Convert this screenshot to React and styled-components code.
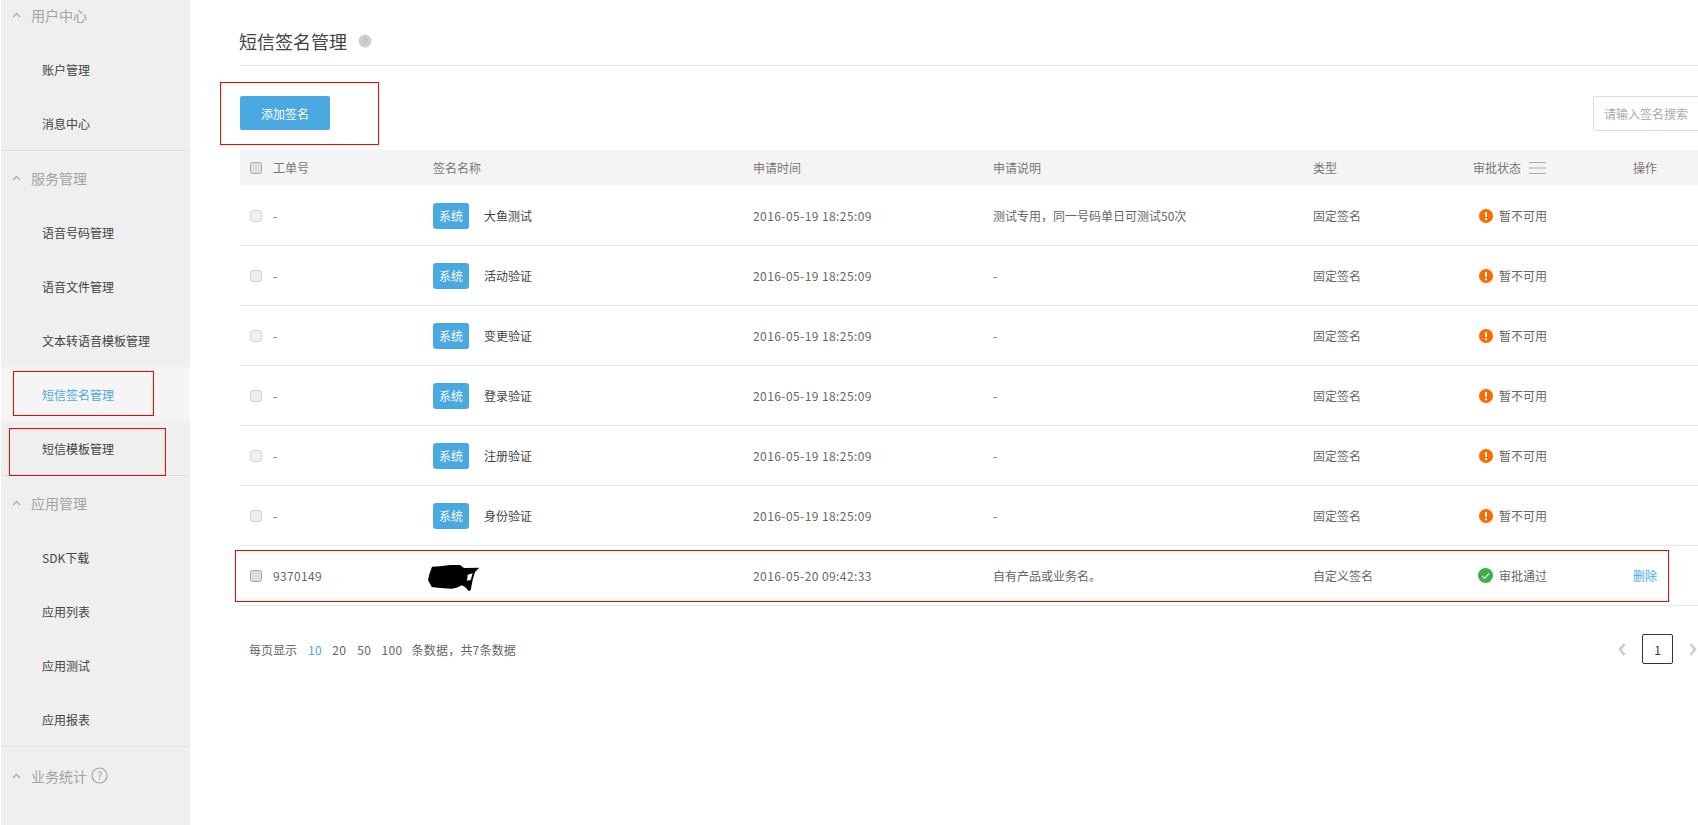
import React from "react";
import styled, { createGlobalStyle } from "styled-components";

const Global = createGlobalStyle`
  html, body { margin: 0; padding: 0; height: 100%; background: #fff; overflow: hidden; }
  body { font-family: "Noto Sans CJK SC", "Noto Sans", "Liberation Sans", sans-serif; font-size: 12px; color: #666; }
`;

const Page = styled.div`
  position: relative;
  display: flex;
  width: 1698px;
  height: 825px;
  overflow: hidden;
`;

const Sidebar = styled.nav`
  flex: 0 0 189px;
  margin-left: 1px;
  height: 825px;
  background: #efefef;
  overflow: hidden;
`;

const MenuStack = styled.div`
  margin-top: -12px;
`;

const Group = styled.section`
  border-bottom: 1px solid #e0e0e0;
  &:last-child { border-bottom: 0; padding-top: 2px; }
`;

const GroupTitle = styled.div`
  display: flex;
  align-items: center;
  height: 54px;
  padding-left: 11px;
  padding-bottom: 1px;
  box-sizing: border-box;
  font-size: 14px;
  color: #a3a3a3;
`;

const Caret = styled.svg`
  width: 9px;
  height: 6px;
  margin-right: 10px;
  fill: none;
  stroke: #aaa;
  stroke-width: 1.4;
`;

const HelpRing = styled.svg`
  width: 17px;
  height: 17px;
  margin-left: 4px;
`;

const MenuItem = styled.a`
  display: flex;
  align-items: center;
  height: 54px;
  padding-left: 41px;
  font-size: 12px;
  color: ${p => (p.$active ? "#4aa9e0" : "#444")};
  background: ${p => (p.$active ? "#f5f5f5" : "transparent")};
`;

const Main = styled.main`
  flex: 0 0 auto;
  width: 1470px;
  margin-left: 50px;
`;

const Heading = styled.header`
  display: flex;
  align-items: center;
  box-sizing: border-box;
  height: 66px;
  padding-top: 17px;
  border-bottom: 1px solid #e8e8e8;
`;

const Title = styled.h1`
  margin: 0 0 0 -1px;
  font-size: 18px;
  font-weight: 400;
  color: #444;
`;

const TitleHelp = styled.svg`
  width: 14px;
  height: 14px;
  margin-left: 11px;
`;

const Toolbar = styled.div`
  display: flex;
  justify-content: space-between;
  align-items: flex-start;
  box-sizing: border-box;
  height: 84px;
  padding-top: 30px;
`;

const PrimaryButton = styled.button`
  width: 90px;
  height: 34px;
  border: 0;
  border-radius: 2px;
  background: #4aa9e0;
  color: #fff;
  font: inherit;
  padding: 0;
`;

const SearchInput = styled.input`
  box-sizing: border-box;
  width: 117px;
  height: 35px;
  padding: 0 10px;
  border: 1px solid #ddd;
  border-radius: 2px;
  font: inherit;
  &::placeholder { color: #aaa; opacity: 1; }
`;

const columns = "193px 320px 240px 320px 160px 160px 77px";

const HeadRow = styled.div`
  display: grid;
  grid-template-columns: ${columns};
  align-items: center;
  height: 35px;
  margin-bottom: 1px;
  background: #f4f4f4;
  color: #777;
`;

const Row = styled.div`
  display: grid;
  grid-template-columns: ${columns};
  align-items: center;
  box-sizing: border-box;
  height: 60px;
  border-bottom: 1px solid #e8e8e8;
  color: #666;
`;

const IdCell = styled.div`
  display: flex;
  align-items: center;
  gap: 11px;
  padding-left: 10px;
`;

const IdText = styled.span`
  letter-spacing: 0.35px;
`;

const DateCell = styled.div`
  letter-spacing: 0.42px;
`;

const Check = styled.input.attrs({ type: "checkbox" })`
  appearance: none;
  box-sizing: border-box;
  width: 12px;
  height: 12px;
  margin: 0;
  border-radius: 3px;
  border: 1px solid ${p => (p.$strong ? "#a8a8a8" : "#d2d2d2")};
  background: ${p => (p.$strong ? "#dedede" : "#efefef")};
`;

const NameCell = styled.div`
  display: flex;
  align-items: center;
  gap: 15px;
  color: #444;
`;

const Badge = styled.span`
  display: flex;
  align-items: center;
  justify-content: center;
  width: 36px;
  height: 26px;
  border-radius: 3px;
  background: #4aa9e0;
  color: #fff;
`;

const Scribble = styled.svg`
  width: 70px;
  height: 45px;
  margin: 5px 0 0 -13px;
`;

const HeadSort = styled.div`
  display: flex;
  align-items: center;
  gap: 8px;
`;

const SortIcon = styled.svg`
  width: 17px;
  height: 14px;
`;

const StatusCell = styled.div`
  display: flex;
  align-items: center;
  gap: 6px;
  padding-left: ${p => (p.$ok ? "5px" : "6px")};
`;

const StatusIcon = styled.svg`
  width: ${p => (p.$ok ? "15px" : "14px")};
  height: ${p => (p.$ok ? "15px" : "14px")};
`;

const ActionLink = styled.a`
  color: #4aa9e0;
`;

const Footer = styled.footer`
  display: flex;
  justify-content: space-between;
  align-items: center;
  box-sizing: border-box;
  height: 86px;
  padding: 0 13px 0 9px;
`;

const PageSizes = styled.div`
  display: flex;
  align-items: center;
`;

const SizeLabel = styled.span`
  margin-right: ${p => p.$gap || 0}px;
  letter-spacing: ${p => (p.$gap ? 0 : 0.2)}px;
`;

const SizeOption = styled.a`
  margin-right: ${p => p.$gap}px;
  letter-spacing: 0.4px;
  color: ${p => (p.$active ? "#4aa9e0" : "#666")};
`;

const Pager = styled.div`
  display: flex;
  align-items: center;
  gap: 16px;
`;

const PagerArrow = styled.svg`
  width: 8px;
  height: 13px;
  fill: none;
  stroke: #ccc;
  stroke-width: 2.6;
`;

const PageBox = styled.span`
  display: flex;
  align-items: center;
  justify-content: center;
  box-sizing: border-box;
  width: 31px;
  height: 30px;
  border: 1px solid #333;
  border-radius: 2px;
  color: #333;
`;

const Annotation = styled.div`
  position: absolute;
  box-sizing: border-box;
  left: ${p => p.$x}px;
  top: ${p => p.$y}px;
  width: ${p => p.$w}px;
  height: ${p => p.$h}px;
  border: 1px solid #f00;
  pointer-events: none;
`;

const menu = [
  { title: "用户中心", items: ["账户管理", "消息中心"] },
  { title: "服务管理", items: ["语音号码管理", "语音文件管理", "文本转语音模板管理", "短信签名管理", "短信模板管理"] },
  { title: "应用管理", items: ["SDK下载", "应用列表", "应用测试", "应用报表"] },
  { title: "业务统计", help: true, items: ["语音日调用统计"] },
];

const rows = [
  ["大鱼测试", "测试专用，同一号码单日可测试50次"],
  ["活动验证", "-"],
  ["变更验证", "-"],
  ["登录验证", "-"],
  ["注册验证", "-"],
  ["身份验证", "-"],
];

const Warn = () => (
  <StatusIcon viewBox="0 0 14 14">
    <circle cx="7" cy="7" r="7" fill="#ff6a00" />
    <rect x="6" y="3" width="2" height="5" fill="#fff" />
    <rect x="6" y="9.2" width="2" height="2" fill="#fff" />
  </StatusIcon>
);

const Ok = () => (
  <StatusIcon $ok viewBox="0 0 15 15">
    <circle cx="7.5" cy="7.5" r="7.5" fill="#3fae49" />
    <path d="M4 7.8l2.6 2.6L11.2 5.4" fill="none" stroke="#dff3e0" strokeWidth="1.2" />
  </StatusIcon>
);

export default function App() {
  return (
    <Page>
      <Global />
      <Sidebar>
        <MenuStack>
          {menu.map(g => (
            <Group key={g.title}>
              <GroupTitle>
                <Caret viewBox="0 0 9 6"><path d="M1 5l3.5-3.5L8 5" /></Caret>
                {g.title}
                {g.help && (
                  <HelpRing viewBox="0 0 17 17">
                    <circle cx="8.5" cy="8.5" r="7.5" fill="none" stroke="#a3a3a3" strokeWidth="1.2" />
                    <text x="8.5" y="12.5" textAnchor="middle" fontSize="11" fill="#a3a3a3">?</text>
                  </HelpRing>
                )}
              </GroupTitle>
              {g.items.map(it => (
                <MenuItem key={it} $active={it === "短信签名管理"}>{it}</MenuItem>
              ))}
            </Group>
          ))}
        </MenuStack>
      </Sidebar>
      <Main>
        <Heading>
          <Title>短信签名管理</Title>
          <TitleHelp viewBox="0 0 14 14">
            <circle cx="7" cy="7" r="6.5" fill="#cfcfcf" />
            <text x="7" y="10.5" textAnchor="middle" fontSize="9" fill="#b5b5b5">?</text>
          </TitleHelp>
        </Heading>
        <Toolbar>
          <PrimaryButton>添加签名</PrimaryButton>
          <SearchInput placeholder="请输入签名搜索" />
        </Toolbar>
        <HeadRow>
          <IdCell><Check $strong />工单号</IdCell>
          <div>签名名称</div>
          <div>申请时间</div>
          <div>申请说明</div>
          <div>类型</div>
          <HeadSort>
            审批状态
            <SortIcon viewBox="0 0 17 14">
              <path d="M0 1.5h17M0 7h17M0 12.5h17" stroke="#aaa" strokeWidth="1" />
            </SortIcon>
          </HeadSort>
          <div>操作</div>
        </HeadRow>
        {rows.map(([name, note]) => (
          <Row key={name}>
            <IdCell><Check />-</IdCell>
            <NameCell><Badge>系统</Badge>{name}</NameCell>
            <DateCell>2016-05-19 18:25:09</DateCell>
            <div>{note}</div>
            <div>固定签名</div>
            <StatusCell><Warn />暂不可用</StatusCell>
            <div />
          </Row>
        ))}
        <Row>
          <IdCell><Check $strong /><IdText>9370149</IdText></IdCell>
          <NameCell>
            <Scribble viewBox="0 0 210 135">
              <path
                fill="#000"
                fillRule="evenodd"
                d="M36 32L60 31L90 27L120 27L132 36L178 35L165 48L158 72L152 103L146 105L136 94L125 88L110 95L95 98L60 96L35 93L24 72L28 55ZM143 56L158 52L152 72L141 74Z"
              />
            </Scribble>
          </NameCell>
          <DateCell>2016-05-20 09:42:33</DateCell>
          <div>自有产品或业务名。</div>
          <div>自定义签名</div>
          <StatusCell $ok><Ok />审批通过</StatusCell>
          <div><ActionLink>删除</ActionLink></div>
        </Row>
        <Footer>
          <PageSizes>
            <SizeLabel $gap={11}>每页显示</SizeLabel>
            <SizeOption $active $gap={10}>10</SizeOption>
            <SizeOption $gap={11}>20</SizeOption>
            <SizeOption $gap={10}>50</SizeOption>
            <SizeOption $gap={9}>100</SizeOption>
            <SizeLabel>条数据，共7条数据</SizeLabel>
          </PageSizes>
          <Pager>
            <PagerArrow viewBox="0 0 8 13"><path d="M6.5 1L2 6.5 6.5 12" /></PagerArrow>
            <PageBox>1</PageBox>
            <PagerArrow viewBox="0 0 8 13"><path d="M1.5 1L6 6.5 1.5 12" /></PagerArrow>
          </Pager>
        </Footer>
      </Main>
      <Annotation $x={220} $y={82} $w={159} $h={63} />
      <Annotation $x={13} $y={371} $w={141} $h={45} />
      <Annotation $x={9} $y={428} $w={157} $h={48} />
      <Annotation $x={235} $y={550} $w={1434} $h={52} />
    </Page>
  );
}
